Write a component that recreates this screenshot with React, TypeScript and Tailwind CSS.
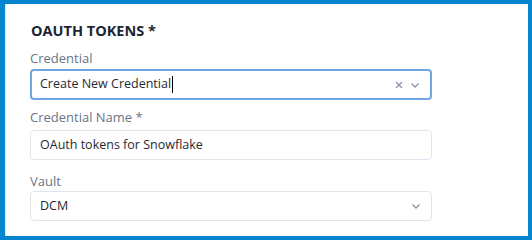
import React from "react";

const font = { fontFamily: '"Open Sans", "Noto Sans", sans-serif' };

const Chevron = () => (
  <svg width="12" height="12" viewBox="0 0 12 12" fill="none" stroke="#8b93ad" strokeWidth="1.3">
    <path d="M2.5 4.5 L6 8 L9.5 4.5" />
  </svg>
);

const Clear = () => (
  <svg width="10" height="10" viewBox="0 0 10 10" fill="none" stroke="#8b93ad" strokeWidth="1.3">
    <path d="M2 2 L8 8 M8 2 L2 8" />
  </svg>
);

const Label = ({ children }: { children: React.ReactNode }) => (
  <div className="text-[13px] leading-[18px] text-[#6b7385]">{children}</div>
);

export default function App() {
  return (
    <div
      className="w-[532px] h-[240px] bg-[#0786cf] pt-1 pr-1 pb-1 pl-[5px] flex"
      style={font}
    >
      <div className="flex-1 bg-white border-l border-[#dfe6f0] pl-[24px] pr-[96px] pt-[17px]">
        <div className="text-[14.5px] leading-[20px] font-bold text-[#1d2533] pl-px">
          OAUTH TOKENS *
        </div>

        <div className="mt-[8px]">
          <Label>Credential</Label>
          <div className="mt-[2px] h-[31px] rounded-[4px] border-2 border-[#6fa5e3] flex items-center pl-[8px] pr-[9px]">
            <span className="text-[12.5px] text-[#262a33]">Create New Credential</span>
            <span className="w-px h-[17px] bg-black ml-px" />
            <div className="flex-1" />
            <div className="flex items-center gap-[5px]">
              <Clear />
              <Chevron />
            </div>
          </div>
        </div>

        <div className="mt-[8px]">
          <Label>Credential Name *</Label>
          <div className="mt-[4px] h-[30px] rounded-[4px] border border-[#dfe5ef] flex items-center pl-[9px]">
            <span className="text-[12.5px] text-[#262a33]">OAuth tokens for Snowflake</span>
          </div>
        </div>

        <div className="mt-[12px]">
          <Label>Vault</Label>
          <div className="mt-[1px] h-[30px] rounded-[4px] border border-[#dfe5ef] flex items-center pl-[9px] pr-[9px]">
            <span className="text-[12.5px] text-[#262a33]">DCM</span>
            <div className="flex-1" />
            <Chevron />
          </div>
        </div>
      </div>
    </div>
  );
}
